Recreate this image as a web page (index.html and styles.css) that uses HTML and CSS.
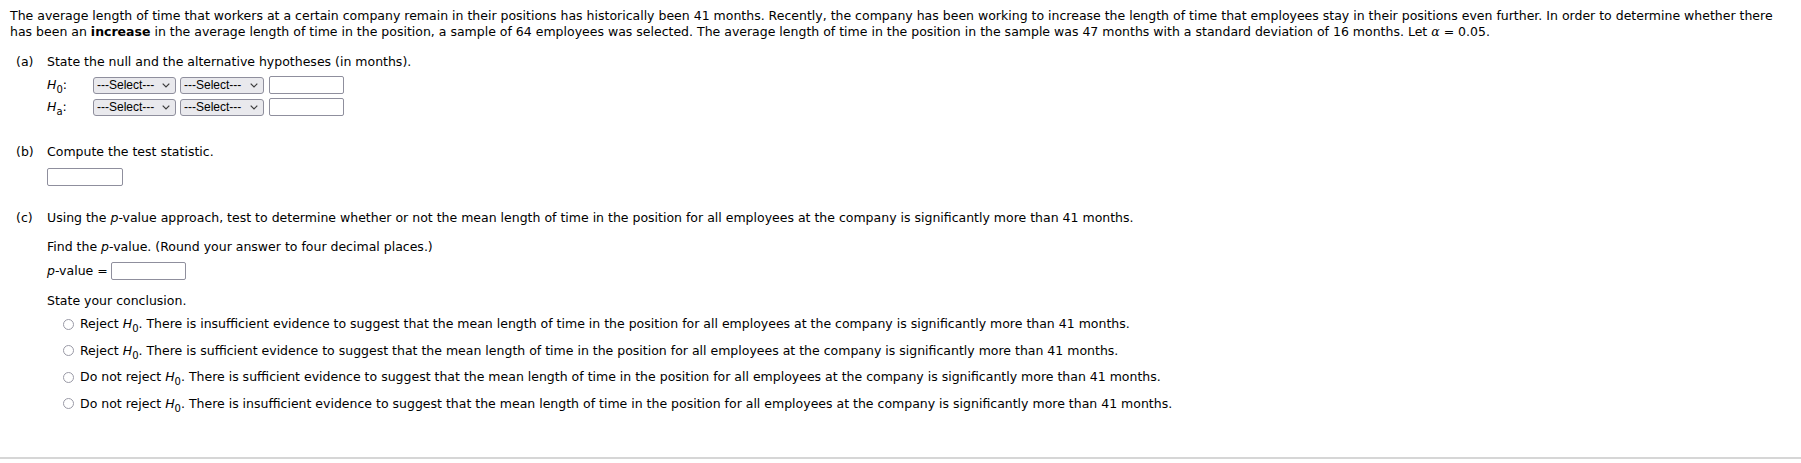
FILE: index.html
```html
<!DOCTYPE html>
<html lang="en">
<head>
<meta charset="utf-8">
<title>Hypothesis test</title>
<link rel="stylesheet" href="styles.css">
</head>
<body>
<div class="question">
  <p class="intro">The average length of time that workers at a certain company remain in their positions has historically been 41 months. Recently, the company has been working to increase the length of time that employees stay in their positions even further. In order to determine whether there has been an <b>increase</b> in the average length of time in the position, a sample of 64 employees was selected. The average length of time in the position in the sample was 47 months with a standard deviation of 16 months. Let <i class="alpha">α</i> = 0.05.</p>

  <div class="part part-a">
    <div class="part-label">(a)</div>
    <div class="part-body">
      <p class="line">State the null and the alternative hypotheses (in months).</p>
      <div class="hyp-grid">
        <span class="hlabel"><i>H</i><sub>0</sub>:</span>
        <span class="sel"><select><option>---Select---</option></select><svg class="chev" width="8" height="5" viewBox="0 0 8 5"><polyline points="0.7,0.7 4,4 7.3,0.7" fill="none" stroke="#3b3b3b" stroke-width="1.2"/></svg></span>
        <span class="sel sel2"><select><option>---Select---</option></select><svg class="chev" width="8" height="5" viewBox="0 0 8 5"><polyline points="0.7,0.7 4,4 7.3,0.7" fill="none" stroke="#3b3b3b" stroke-width="1.2"/></svg></span>
        <input class="box box-h" type="text">

        <span class="hlabel"><i>H</i><sub>a</sub>:</span>
        <span class="sel"><select><option>---Select---</option></select><svg class="chev" width="8" height="5" viewBox="0 0 8 5"><polyline points="0.7,0.7 4,4 7.3,0.7" fill="none" stroke="#3b3b3b" stroke-width="1.2"/></svg></span>
        <span class="sel sel2"><select><option>---Select---</option></select><svg class="chev" width="8" height="5" viewBox="0 0 8 5"><polyline points="0.7,0.7 4,4 7.3,0.7" fill="none" stroke="#3b3b3b" stroke-width="1.2"/></svg></span>
        <input class="box box-h" type="text">
      </div>
    </div>
  </div>

  <div class="part part-b">
    <div class="part-label">(b)</div>
    <div class="part-body">
      <p class="line">Compute the test statistic.</p>
      <input class="box box-b" type="text">
    </div>
  </div>

  <div class="part part-c">
    <div class="part-label">(c)</div>
    <div class="part-body">
      <p class="line">Using the <i>p</i>-value approach, test to determine whether or not the mean length of time in the position for all employees at the company is significantly more than 41 months.</p>
      <p class="line find">Find the <i>p</i>-value. (Round your answer to four decimal places.)</p>
      <div class="pval"><span><i>p</i>-value =</span><input class="box box-p" type="text"></div>
      <p class="line state">State your conclusion.</p>
      <ul class="options">
        <li><label><input type="radio" name="c"><span>Reject <i>H</i><sub>0</sub>. There is insufficient evidence to suggest that the mean length of time in the position for all employees at the company is significantly more than 41 months.</span></label></li>
        <li><label><input type="radio" name="c"><span>Reject <i>H</i><sub>0</sub>. There is sufficient evidence to suggest that the mean length of time in the position for all employees at the company is significantly more than 41 months.</span></label></li>
        <li><label><input type="radio" name="c"><span>Do not reject <i>H</i><sub>0</sub>. There is sufficient evidence to suggest that the mean length of time in the position for all employees at the company is significantly more than 41 months.</span></label></li>
        <li><label><input type="radio" name="c"><span>Do not reject <i>H</i><sub>0</sub>. There is insufficient evidence to suggest that the mean length of time in the position for all employees at the company is significantly more than 41 months.</span></label></li>
      </ul>
    </div>
  </div>
</div>
</body>
</html>
```

FILE: styles.css
```css
* { box-sizing: border-box; }

body {
  margin: 0;
  background: #fff;
  color: #000;
  font-family: "DejaVu Sans", Verdana, sans-serif;
  font-size: 12.5px;
  line-height: 16px;
}

.question {
  padding: 8px 16px 40px 10px;
  border-bottom: 2px solid #d6d6d6;
}

p { margin: 0; }

.alpha { font-family: "DejaVu Serif", serif; }

sub {
  font-size: 10px;
  line-height: 0;
  vertical-align: -4px;
  font-style: normal;
}

.part {
  display: flex;
  margin-left: 6px;
}

.part-label {
  flex: none;
  width: 31px;
}

.part-body { flex: 1; }

.part-a { margin-top: 14px; }
.part-b { margin-top: 28px; }
.part-c { margin-top: 24px; }

.hyp-grid {
  display: grid;
  grid-template-columns: 42px 83px 84px 75px;
  column-gap: 4px;
  row-gap: 4px;
  align-items: center;
  margin-top: 6px;
}

.hyp-grid .box-h { margin-left: 1px; }

.hlabel { line-height: 18px; }

.sel {
  position: relative;
  display: block;
  height: 17px;
}

.sel select {
  appearance: none;
  -webkit-appearance: none;
  display: block;
  width: 100%;
  height: 17px;
  margin: 0;
  padding: 0 0 0 3px;
  border: 1px solid #8f8f9d;
  border-radius: 3px;
  background: #e9e9ed;
  color: #000;
  font-family: "Liberation Sans", Arial, sans-serif;
  font-size: 12px;
  line-height: 15px;
}

.chev {
  position: absolute;
  right: 6px;
  top: 6px;
  pointer-events: none;
}

.box {
  display: block;
  height: 18px;
  margin: 0;
  padding: 0 3px;
  border: 1px solid #8f8f9d;
  border-radius: 2px;
  background: #fff;
  font-family: "Liberation Sans", Arial, sans-serif;
  font-size: 12px;
}

.box-h { width: 75px; }

.box-b {
  width: 76px;
  margin-top: 8px;
}

.find { margin-top: 13px; }

.pval {
  display: flex;
  align-items: center;
  gap: 3px;
  margin-top: 7px;
}

.box-p { width: 75px; }

.state { margin-top: 13px; }

.options {
  list-style: none;
  margin: 2px 0 0;
  padding: 0 0 0 16px;
}

.options li {
  height: 26.5px;
  display: flex;
  align-items: center;
}

.options label {
  display: flex;
  align-items: center;
  gap: 6px;
}

.options input[type="radio"] {
  appearance: none;
  -webkit-appearance: none;
  flex: none;
  width: 11px;
  height: 11px;
  margin: 0;
  border: 1px solid #9a9aa6;
  border-radius: 50%;
  background: #fff;
}
```
